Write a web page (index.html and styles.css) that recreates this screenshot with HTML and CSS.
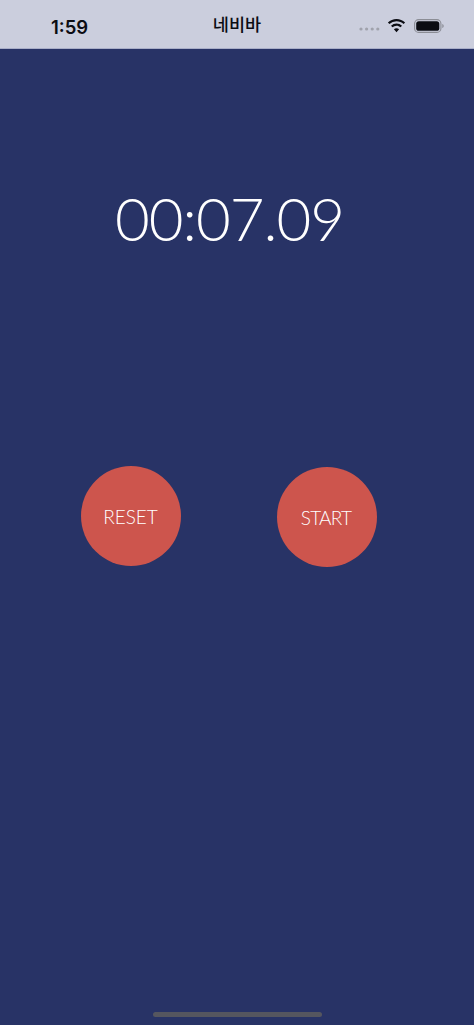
FILE: index.html
```html
<!DOCTYPE html>
<html lang="ko">
<head>
<meta charset="utf-8">
<title>네비바</title>
<link rel="stylesheet" href="styles.css">
</head>
<body>
<header class="bar">
  <span class="time">1:59</span>
  <span class="title">네비바</span>
  <div class="status">
    <svg class="signal" width="21" height="4" viewBox="0 0 21 4"><circle cx="2" cy="2" r="1.6"/><circle cx="7.6" cy="2" r="1.6"/><circle cx="13.2" cy="2" r="1.6"/><circle cx="18.8" cy="2" r="1.6"/></svg>
    <svg class="wifi" width="19" height="14" viewBox="0 0 19 14"><path d="M9.5 2.3c2.7 0 5.2 1 7.1 2.8l1.5-1.6A12.6 12.6 0 0 0 9.500.0 12.600 12.600 0 0 0 .9 3.500l1.500 1.600A10.300 10.300 0 0 1 9.500 2.300z"/><path d="M9.500 6.700c1.500 0 2.900.6 4 1.600l1.500-1.600a8.100 8.100 0 0 0-11 0l1.500 1.600a5.900 5.900 0 0 1 4-1.600z"/><path d="M9.500 9.300c-1 0-1.900.4-2.600 1l2.600 2.900 2.600-2.900c-.7-.6-1.600-1-2.600-1z"/></svg>
    <svg class="battery" width="30" height="14" viewBox="0 0 30 14"><rect x=".6" y=".6" width="26.300" height="12.800" rx="4" fill="none" stroke="#8b8d95" stroke-width="1.100"/><rect x="2.200" y="2.200" width="23.100" height="9.600" rx="2.600"/><path d="M28.300 5v4c.8-.3 1.400-1.100 1.400-2s-.6-1.700-1.400-2z" fill="#8b8d95"/></svg>
  </div>
</header>
<main class="screen">
  <div class="clock">00:07.09</div>
  <div class="controls">
    <button class="round" type="button">RESET</button>
    <button class="round lower" type="button">START</button>
  </div>
</main>
<div class="home"></div>
</body>
</html>
```
FILE: styles.css
```css
* { box-sizing: border-box; }
html, body { margin: 0; height: 100%; }
body {
  width: 474px;
  height: 1025px;
  overflow: hidden;
  position: relative;
  display: flex;
  flex-direction: column;
  background: #283366;
  font-family: "Liberation Sans", "Noto Sans CJK KR", sans-serif;
}
.bar {
  flex: none;
  height: 49px;
  background: #cbcedd;
  border-bottom: 1px solid #a9aec8;
  display: grid;
  grid-template-columns: 1fr auto 1fr;
  color: #0b0c12;
}
.time {
  font-family: Inter, "Liberation Sans", sans-serif;
  font-weight: 600;
  font-size: 18.500px;
  line-height: 22px;
  padding: 16px 0 0 51px;
}
.title {
  font-family: "Noto Sans CJK KR", sans-serif;
  font-weight: 500;
  font-size: 17.500px;
  line-height: 24px;
  padding-top: 12px;
}
.status {
  display: flex;
  align-items: center;
  justify-content: flex-end;
  padding: 4px 30px 0 0;
}
.signal { fill: #a0a2ac; margin-right: 7px; margin-top: 6px; }
.wifi { fill: #0b0c12; margin-right: 8px; }
.battery { fill: #0b0c12; }
.screen {
  flex: 1;
  padding-top: 134px;
  display: flex;
  flex-direction: column;
}
.clock {
  color: #fff;
  font-family: "Lato", sans-serif;
  font-weight: 300;
  font-size: 60px;
  line-height: 70px;
  text-align: center;
  letter-spacing: -1px;
  padding-right: 15px;
}
.controls {
  display: flex;
  gap: 96px;
  padding: 213px 0 0 81px;
  align-items: flex-start;
}
.round {
  width: 100px;
  height: 100px;
  padding: 0 1px 0 0;
  border: 0;
  border-radius: 50%;
  background: #cd554d;
  color: #fff;
  font-family: "Lato", sans-serif;
  font-weight: 300;
  font-size: 19px;
}
.lower { margin-top: 1px; padding-right: 2px; letter-spacing: -0.800px; }
.home {
  position: absolute;
  left: 153px;
  bottom: 8px;
  width: 169px;
  height: 5px;
  border-radius: 3px;
  background: #55565f;
}
```
